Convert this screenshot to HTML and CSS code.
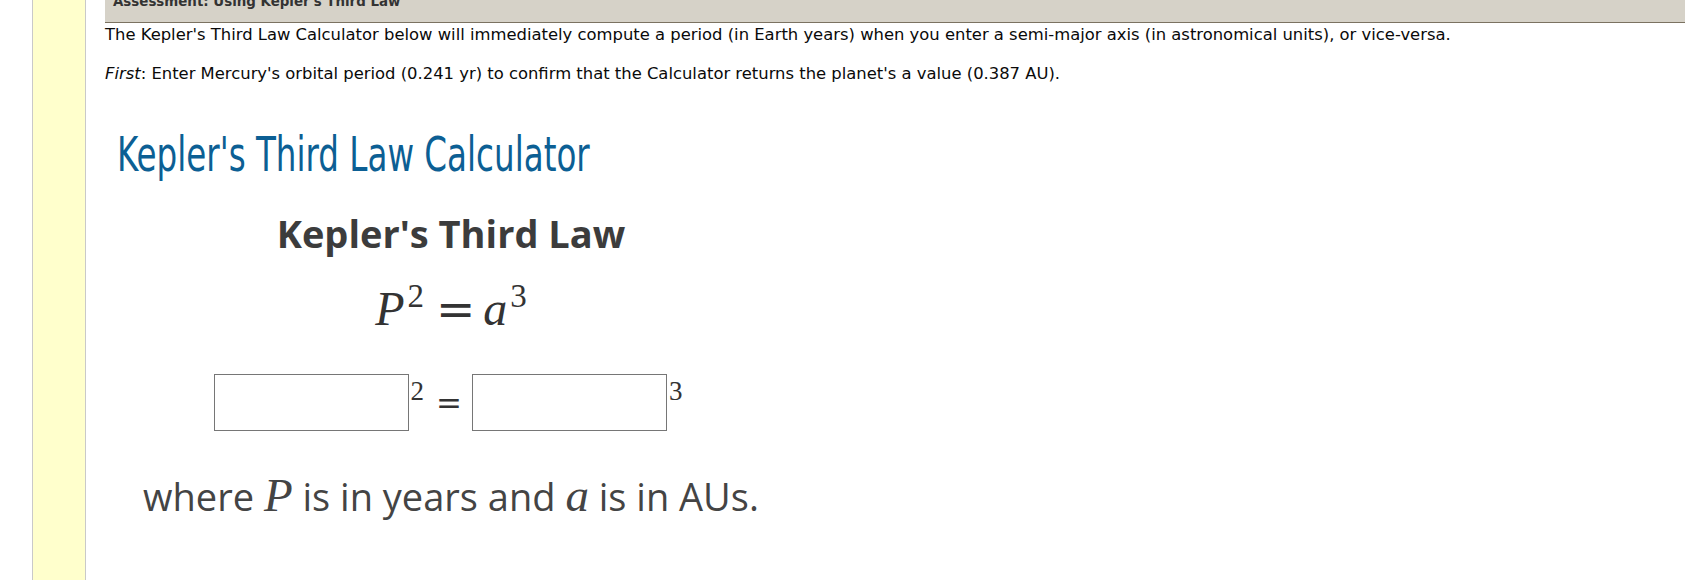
FILE: index.html
```html
<!DOCTYPE html>
<html lang="en">
<head>
<meta charset="utf-8">
<title>Kepler's Third Law Calculator</title>
<link rel="stylesheet" href="styles.css">
</head>
<body>
<div class="page">
  <aside class="strip"></aside>
  <main class="content">
    <div class="assess-head">Assessment: Using Kepler's Third Law</div>
    <p class="intro">The Kepler's Third Law Calculator below will immediately compute a period (in Earth years) when you enter a semi-major axis (in astronomical units), or vice-versa.</p>
    <p class="intro"><em>First</em>: Enter Mercury's orbital period (0.241 yr) to confirm that the Calculator returns the planet's a value (0.387 AU).</p>
    <section class="calc">
      <h1 class="calc-title"><span class="calc-title-text">Kepler's Third Law Calculator</span></h1>
      <div class="calc-body">
        <h2 class="law-title">Kepler's Third Law</h2>
        <div class="formula"><span class="mi">P</span><sup class="msup">2</sup><span class="mo">=</span><span class="mi">a</span><sup class="msup">3</sup></div>
        <div class="inputs">
          <input class="box" type="text" aria-label="Period in years">
          <sup class="box-exp">2</sup>
          <span class="box-eq">=</span>
          <input class="box" type="text" aria-label="Semi-major axis in AU">
          <sup class="box-exp">3</sup>
        </div>
        <p class="where">where <span class="mi-inline">P</span> is in years and <span class="mi-inline">a</span> is in AUs.</p>
      </div>
    </section>
  </main>
</div>
</body>
</html>
```

FILE: styles.css
```css
html, body {
  margin: 0;
  padding: 0;
  background: #ffffff;
}

.page {
  display: flex;
  min-height: 100vh;
  overflow: hidden;
}

.strip {
  flex: 0 0 52px;
  margin-left: 32px;
  background: #ffffcc;
  border-left: 1px solid #c9c9c9;
  border-right: 1px solid #c9c9c9;
}

.content {
  flex: 1;
  margin-left: 19px;
  font-family: "DejaVu Sans", Verdana, sans-serif;
  font-size: 13px;
  color: #000;
}

.assess-head {
  margin-top: -14px;
  padding: 8px 8px 12px;
  line-height: 16px;
  font-weight: bold;
  font-size: 13.4px;
  color: #333;
  background: #d6d2c8;
  border-bottom: 1px solid #7b7261;
}

.intro {
  margin: 0 0 19px;
  font-size: 16.4px;
  line-height: 20px;
  color: #0a0a0a;
}

.intro:first-of-type {
  margin-top: 2px;
}

.calc {
  width: 692px;
}

.calc-title {
  margin: 44px 0 0;
  padding-left: 12px;
  font-family: "DejaVu Sans Condensed", "Liberation Sans", sans-serif;
  font-weight: normal;
  font-size: 48px;
  line-height: 53px;
  color: #0c5f94;
  white-space: nowrap;
}

.calc-title-text {
  display: inline-block;
  transform: scaleX(0.754);
  transform-origin: left center;
}

.calc-body {
  text-align: center;
}

.law-title {
  margin: 29px 0 0;
  font-family: "Open Sans", sans-serif;
  font-weight: bold;
  font-size: 38px;
  line-height: 46px;
  color: #3c3c3c;
}

.formula {
  margin-top: 23px;
  font-family: "Liberation Serif", serif;
  font-size: 48px;
  line-height: 60px;
  color: #333;
}

.mi {
  font-style: italic;
}

.msup {
  font-size: 33px;
  line-height: 0;
  vertical-align: 18px;
  margin-left: 3px;
}

.mo {
  font-family: "DejaVu Serif", serif;
  font-size: 47px;
  margin: 0 8px 0 12px;
}

.inputs {
  display: flex;
  justify-content: center;
  align-items: flex-start;
  margin-top: 35px;
  padding-right: 6px;
}

.box {
  box-sizing: border-box;
  width: 195px;
  height: 57px;
  margin: 0;
  padding: 0 6px;
  border: 1px solid #767676;
  background: #fff;
  font-size: 20px;
}

.box-exp {
  margin: 4px 0 0 2px;
  font-family: "Liberation Serif", serif;
  font-size: 27px;
  line-height: 26px;
  vertical-align: baseline;
  color: #333;
}

.box-eq {
  align-self: center;
  margin: 0 10px 0 12px;
  font-family: "DejaVu Serif", serif;
  font-size: 31px;
  line-height: 30px;
  color: #333;
}

.where {
  margin: 42px 0 0;
  font-family: "Open Sans", sans-serif;
  font-size: 38px;
  line-height: 44px;
  color: #444;
}

.mi-inline {
  font-family: "Liberation Serif", serif;
  font-style: italic;
  font-size: 47px;
}
```
